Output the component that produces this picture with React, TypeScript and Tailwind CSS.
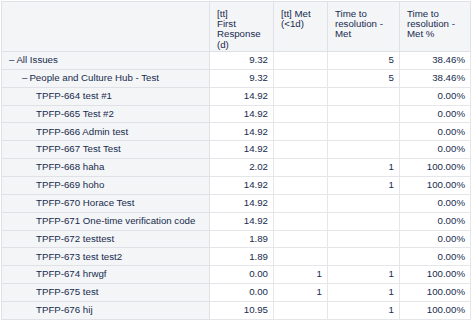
import React from "react";

interface Row {
  label: string;
  level: 0 | 1 | 2;
  first: string;
  met: string;
  res: string;
  pct: string;
}

const ROWS: Row[] = [
  { label: "All Issues", level: 0, first: "9.32", met: "", res: "5", pct: "38.46%" },
  { label: "People and Culture Hub - Test", level: 1, first: "9.32", met: "", res: "5", pct: "38.46%" },
  { label: "TPFP-664 test #1", level: 2, first: "14.92", met: "", res: "", pct: "0.00%" },
  { label: "TPFP-665 Test #2", level: 2, first: "14.92", met: "", res: "", pct: "0.00%" },
  { label: "TPFP-666 Admin test", level: 2, first: "14.92", met: "", res: "", pct: "0.00%" },
  { label: "TPFP-667 Test Test", level: 2, first: "14.92", met: "", res: "", pct: "0.00%" },
  { label: "TPFP-668 haha", level: 2, first: "2.02", met: "", res: "1", pct: "100.00%" },
  { label: "TPFP-669 hoho", level: 2, first: "14.92", met: "", res: "1", pct: "100.00%" },
  { label: "TPFP-670 Horace Test", level: 2, first: "14.92", met: "", res: "", pct: "0.00%" },
  { label: "TPFP-671 One-time verification code", level: 2, first: "14.92", met: "", res: "", pct: "0.00%" },
  { label: "TPFP-672 testtest", level: 2, first: "1.89", met: "", res: "", pct: "0.00%" },
  { label: "TPFP-673 test test2", level: 2, first: "1.89", met: "", res: "", pct: "0.00%" },
  { label: "TPFP-674 hrwgf", level: 2, first: "0.00", met: "1", res: "1", pct: "100.00%" },
  { label: "TPFP-675 test", level: 2, first: "0.00", met: "1", res: "1", pct: "100.00%" },
  { label: "TPFP-676 hij", level: 2, first: "10.95", met: "", res: "1", pct: "100.00%" },
];

const INDENT: Record<number, string> = {
  0: "pl-[7px]",
  1: "pl-[20px]",
  2: "pl-[34px]",
};

export default function App() {
  const headCls = "h-[50px] bg-[#f4f5f7] border-r border-b border-[#dfe1e6] pl-[7px] pt-[7px] leading-[10.2px]";
  const numCls = "h-[17.87px] bg-white border-r border-b border-[#e4e6ea] flex items-center justify-end pr-[5px]";

  return (
    <div className="w-[474px] h-[323px] bg-white overflow-hidden pt-px pl-px text-[9.7px] text-[#172b4d]" style={{ fontFamily: '"Liberation Sans", Arial, sans-serif' }}>
      <div className="grid grid-cols-[208px_64px_54px_72px_71px] border-t border-l border-[#dfe1e6] w-fit">
        {/* Header */}
        <div className={headCls} />
        <div className={headCls}>[tt]<br />First<br />Response<br />(d)</div>
        <div className={headCls}>[tt] Met<br />(&lt;1d)</div>
        <div className={headCls}>Time to<br />resolution -<br />Met</div>
        <div className={headCls}>Time to<br />resolution -<br />Met %</div>

        {/* Rows */}
        {ROWS.map(r => (
          <React.Fragment key={r.label}>
            <div className={`h-[17.87px] bg-[#f4f5f7] border-r border-b border-[#dfe1e6] flex items-center ${INDENT[r.level]}`}>
              {r.level < 2 && <span className="mr-[2px]">–</span>}
              <span>{r.label}</span>
            </div>
            <div className={numCls}>{r.first}</div>
            <div className={numCls}>{r.met}</div>
            <div className={numCls}>{r.res}</div>
            <div className={numCls}>{r.pct}</div>
          </React.Fragment>
        ))}
      </div>
    </div>
  );
}
